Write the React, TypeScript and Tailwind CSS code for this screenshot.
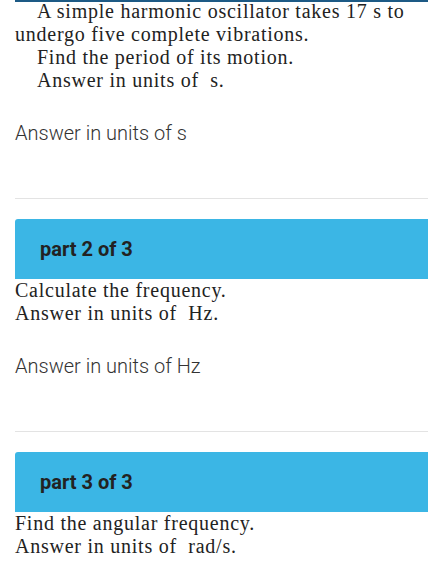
import React from 'react'

const serif = "font-['Liberation_Serif',serif] text-[20px] leading-[23px] tracking-[0.75px] text-[#222]"
const sans = "font-['Roboto',sans-serif]"

function PartHeader({ label }: { label: string }) {
  return (
    <div className="flex h-[60px] items-center rounded-tl-[3px] bg-[#3bb6e5] pl-[25px]">
      <span className={`${sans} text-[20px] font-bold text-[#222]`}>{label}</span>
    </div>
  )
}

function Prompt({ units }: { units: string }) {
  return (
    <div className={`${sans} h-[106px] pt-[29px] text-[20px] font-light leading-[24px] text-[#333]`}>
      Answer in units of {units}
    </div>
  )
}

export default function App() {
  return (
    <div className="h-[564px] w-[428px] overflow-hidden bg-white">
      <div className="ml-[15px] h-[2px] bg-[#1d5a85]" />
      <div className="pl-[15px]">
        <div className={`${serif} -mt-[2px]`}>
          <p className="pl-[22px]">A simple harmonic oscillator takes 17 s to</p>
          <p>undergo five complete vibrations.</p>
          <p className="pl-[22px]">Find the period of its motion.</p>
          <p className="pl-[22px]">Answer in units of &nbsp;s.</p>
        </div>
        <Prompt units="s" />
        <div className="h-px bg-[#e3e3e3]" />
        <div className="h-[20px]" />
        <PartHeader label="part 2 of 3" />
        <div className={serif}>
          <p>Calculate the frequency.</p>
          <p>Answer in units of &nbsp;Hz.</p>
        </div>
        <Prompt units="Hz" />
        <div className="h-px bg-[#e3e3e3]" />
        <div className="h-[20px]" />
        <PartHeader label="part 3 of 3" />
        <div className={serif}>
          <p>Find the angular frequency.</p>
          <p>Answer in units of &nbsp;rad/s.</p>
        </div>
      </div>
    </div>
  )
}
